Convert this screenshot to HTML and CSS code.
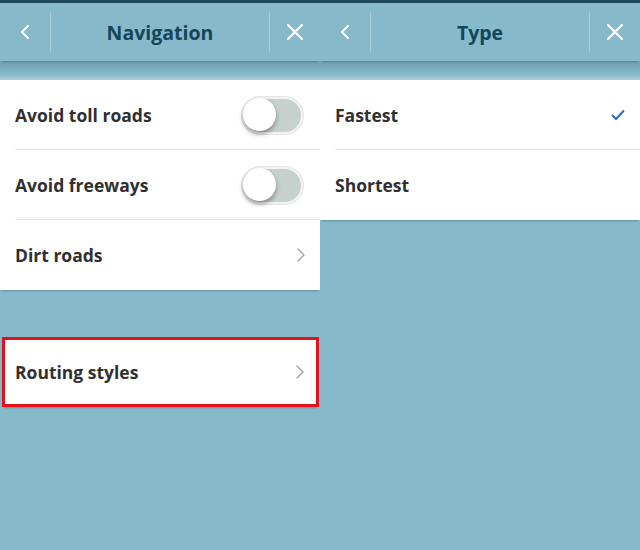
FILE: index.html
```html
<!DOCTYPE html>
<html>
<head>
<meta charset="utf-8">
<link rel="stylesheet" href="styles.css">
</head>
<body>
<div class="topline"></div>
<div class="panels">
  <section class="panel">
    <header class="bar">
      <div class="btn"><svg width="14" height="16" viewBox="0 0 14 16"><path d="M10 2 L4 8 L10 14" fill="none" stroke="#fff" stroke-width="2.2" stroke-linecap="round" stroke-linejoin="round"/></svg></div>
      <div class="title">Navigation</div>
      <div class="btn"><svg width="18" height="18" viewBox="0 0 18 18"><path d="M2 2 L16 16 M16 2 L2 16" stroke="#fff" stroke-width="2.2" stroke-linecap="round"/></svg></div>
    </header>
    <div class="gap"></div>
    <div class="list">
      <div class="row"><span class="label">Avoid toll roads</span><span class="toggle"><span class="knob"></span></span></div>
      <div class="row"><span class="label">Avoid freeways</span><span class="toggle"><span class="knob"></span></span></div>
      <div class="row last"><span class="label">Dirt roads</span><svg class="chev" width="10" height="16" viewBox="0 0 10 16"><path d="M2 2 L8 8 L2 14" fill="none" stroke="#aaa" stroke-width="1.6" stroke-linecap="round" stroke-linejoin="round"/></svg></div>
    </div>
    <div class="list single highlight">
      <div class="row last"><span class="label">Routing styles</span><svg class="chev" width="10" height="16" viewBox="0 0 10 16"><path d="M2 2 L8 8 L2 14" fill="none" stroke="#aaa" stroke-width="1.6" stroke-linecap="round" stroke-linejoin="round"/></svg></div>
    </div>
  </section>
  <section class="panel">
    <header class="bar">
      <div class="btn"><svg width="14" height="16" viewBox="0 0 14 16"><path d="M10 2 L4 8 L10 14" fill="none" stroke="#fff" stroke-width="2.2" stroke-linecap="round" stroke-linejoin="round"/></svg></div>
      <div class="title">Type</div>
      <div class="btn"><svg width="18" height="18" viewBox="0 0 18 18"><path d="M2 2 L16 16 M16 2 L2 16" stroke="#fff" stroke-width="2.2" stroke-linecap="round"/></svg></div>
    </header>
    <div class="gap"></div>
    <div class="list">
      <div class="row"><span class="label">Fastest</span><svg class="check" width="14" height="12" viewBox="0 0 14 12"><path d="M1.5 6.5 L5 10 L12.5 2" fill="none" stroke="#1f6fd1" stroke-width="2" stroke-linecap="round" stroke-linejoin="round"/></svg></div>
      <div class="row last"><span class="label">Shortest</span></div>
    </div>
  </section>
</div>
</body>
</html>
```
FILE: styles.css
```css
html, body {
  margin: 0;
  padding: 0;
}
body {
  width: 640px;
  height: 550px;
  background: #86b9c9;
  font-family: "Open Sans", Lato, sans-serif;
  overflow: hidden;
}
.topline {
  height: 3px;
  background: #1e4b5c;
}
.panels {
  display: flex;
}
.panel {
  width: 320px;
  display: flex;
  flex-direction: column;
}
.bar {
  height: 58px;
  display: flex;
  align-items: center;
  background: #86b9c9;
  box-shadow: 0 3px 2px -2px rgba(40, 90, 110, 0.4);
  position: relative;
  z-index: 2;
}
.btn {
  width: 50px;
  height: 40px;
  display: flex;
  align-items: center;
  justify-content: center;
}
.bar .btn:first-child {
  border-right: 1px solid rgba(255, 255, 255, 0.3);
}
.bar .btn:last-child {
  border-left: 1px solid rgba(255, 255, 255, 0.3);
}
.title {
  flex: 1;
  text-align: center;
  font-size: 19.5px;
  font-weight: 700;
  color: #15455a;
}
.gap {
  height: 19px;
  background: linear-gradient(#6e9fb0, #86b9c9 70%, #a8cdd9);
}
.list {
  background: #fff;
  box-shadow: 0 3px 2px -2px rgba(40, 90, 110, 0.4);
}
.single {
  margin-top: 47px;
}
.highlight {
  border: 3px solid #e2121a;
  margin-left: 2px;
  margin-right: 1px;
}
.highlight .row {
  height: 64px;
  padding-left: 10px;
  padding-right: 13px;
}
.row {
  height: 70px;
  display: flex;
  align-items: center;
  justify-content: space-between;
  padding: 0 16px 0 15px;
  position: relative;
  box-sizing: border-box;
}
.row::after {
  content: "";
  position: absolute;
  left: 15px;
  right: 0;
  bottom: 0;
  height: 1px;
  background: #e6e8e8;
}
.row.last::after {
  display: none;
}
.label {
  font-size: 17.5px;
  font-weight: 700;
  color: #303030;
}
.toggle {
  width: 61px;
  height: 37px;
  box-sizing: border-box;
  border-radius: 19px;
  background: #c6d1cd;
  border: 2px solid #f3f3f3;
  box-shadow: 0 0 0 1px #e4e4e4;
  position: relative;
  margin-right: 1px;
}
.knob {
  position: absolute;
  left: -1px;
  top: -1px;
  width: 33px;
  height: 33px;
  border-radius: 50%;
  background: #fff;
  box-shadow: 0 3px 5px rgba(0, 0, 0, 0.35);
}
.chev {
  margin-right: -2px;
}
.check {
  margin-right: -1px;
}
```
